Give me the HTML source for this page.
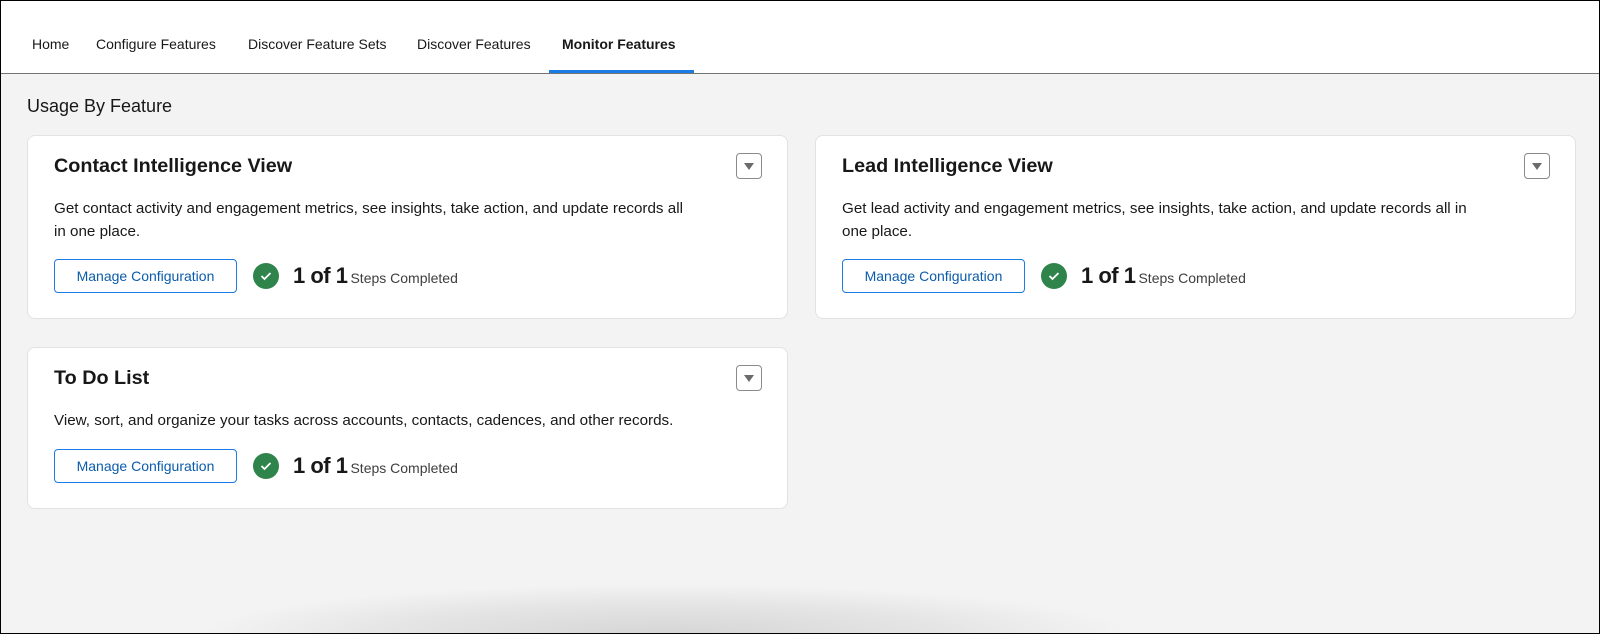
<!DOCTYPE html>
<html style="overflow:hidden;width:1600px;height:634px"><head><style>
*{box-sizing:border-box;margin:0;padding:0}
body{width:1600px;height:634px;overflow:hidden;background:#f3f3f3;font-family:"Liberation Sans",sans-serif;color:#181818;position:relative}
.frame{position:absolute;left:0;top:0;width:1600px;height:634px;border:1px solid #000;pointer-events:none;z-index:10}
.nav{position:absolute;left:0;top:0;width:1600px;height:74px;background:#fff;border-bottom:1px solid #747474}
.nav span{position:absolute;top:36px;font-size:14px;color:#181818}
.nav .act{font-weight:bold}
.ul{position:absolute;left:549px;top:70px;width:145px;height:3px;background:#1b7ce6}
h1{position:absolute;left:27px;top:96px;font-size:18px;font-weight:normal}
.card{position:absolute;background:#fff;border:1px solid #e2e2e2;border-radius:8px}
.card h2{position:absolute;left:26px;top:19px;font-size:19.8px;font-weight:bold}
.dd{position:absolute;width:26px;height:26px;border:1px solid #8a8a8a;border-radius:4px;top:17px}
.dd:after{content:"";position:absolute;left:7px;top:9px;border-left:5.5px solid transparent;border-right:5.5px solid transparent;border-top:7px solid #6b6b6b}
.card p{position:absolute;left:26px;font-size:15.2px;line-height:23px}
.btn{position:absolute;left:26px;width:183px;height:34px;border:1px solid #1b7ce6;border-radius:4px;color:#0b5cab;font-size:14px;text-align:center;line-height:32px}
.chk{position:absolute;left:225px;width:26px;height:26px;border-radius:50%;background:#2e844a}
.chk svg{position:absolute;left:7px;top:8px}
.st{position:absolute;left:265px;white-space:nowrap}
.st b{font-size:22px;letter-spacing:-0.5px}
.st span{font-size:14px;color:#3e3e3e;margin-left:3px}
.shadow{position:absolute;left:200px;top:584px;width:930px;height:50px;background:radial-gradient(ellipse 50% 100% at 50% 100%,rgba(0,0,0,0.12),rgba(0,0,0,0.06) 60%,rgba(0,0,0,0) 100%)}
</style></head><body>
<div class="nav">
<span style="left:32px">Home</span>
<span style="left:96px">Configure Features</span>
<span style="left:248px">Discover Feature Sets</span>
<span style="left:417px">Discover Features</span>
<span class="act" style="left:562px">Monitor Features</span>
<div class="ul"></div>
</div>
<h1>Usage By Feature</h1>

<div class="card" style="left:27px;top:135px;width:761px;height:184px">
<h2>Contact Intelligence View</h2><div class="dd" style="left:708px"></div>
<p style="top:61px;width:642px">Get contact activity and engagement metrics, see insights, take action, and update records all in one place.</p>
<div class="btn" style="top:123px">Manage Configuration</div>
<div class="chk" style="top:127px"><svg width="12" height="10" viewBox="0 0 12 10"><path d="M1.5 5l3 3 6-6" stroke="#fff" stroke-width="1.8" fill="none"/></svg></div>
<div class="st" style="top:127px"><b>1 of 1</b><span>Steps Completed</span></div>
</div>

<div class="card" style="left:815px;top:135px;width:761px;height:184px">
<h2>Lead Intelligence View</h2><div class="dd" style="left:708px"></div>
<p style="top:61px;width:648px">Get lead activity and engagement metrics, see insights, take action, and update records all in one place.</p>
<div class="btn" style="top:123px">Manage Configuration</div>
<div class="chk" style="top:127px"><svg width="12" height="10" viewBox="0 0 12 10"><path d="M1.5 5l3 3 6-6" stroke="#fff" stroke-width="1.8" fill="none"/></svg></div>
<div class="st" style="top:127px"><b>1 of 1</b><span>Steps Completed</span></div>
</div>

<div class="card" style="left:27px;top:347px;width:761px;height:162px">
<h2>To Do List</h2><div class="dd" style="left:708px"></div>
<p style="top:61px;width:720px">View, sort, and organize your tasks across accounts, contacts, cadences, and other records.</p>
<div class="btn" style="top:101px">Manage Configuration</div>
<div class="chk" style="top:105px"><svg width="12" height="10" viewBox="0 0 12 10"><path d="M1.5 5l3 3 6-6" stroke="#fff" stroke-width="1.8" fill="none"/></svg></div>
<div class="st" style="top:105px"><b>1 of 1</b><span>Steps Completed</span></div>
</div>

<div class="shadow"></div>
<div class="frame"></div>
</body></html>
